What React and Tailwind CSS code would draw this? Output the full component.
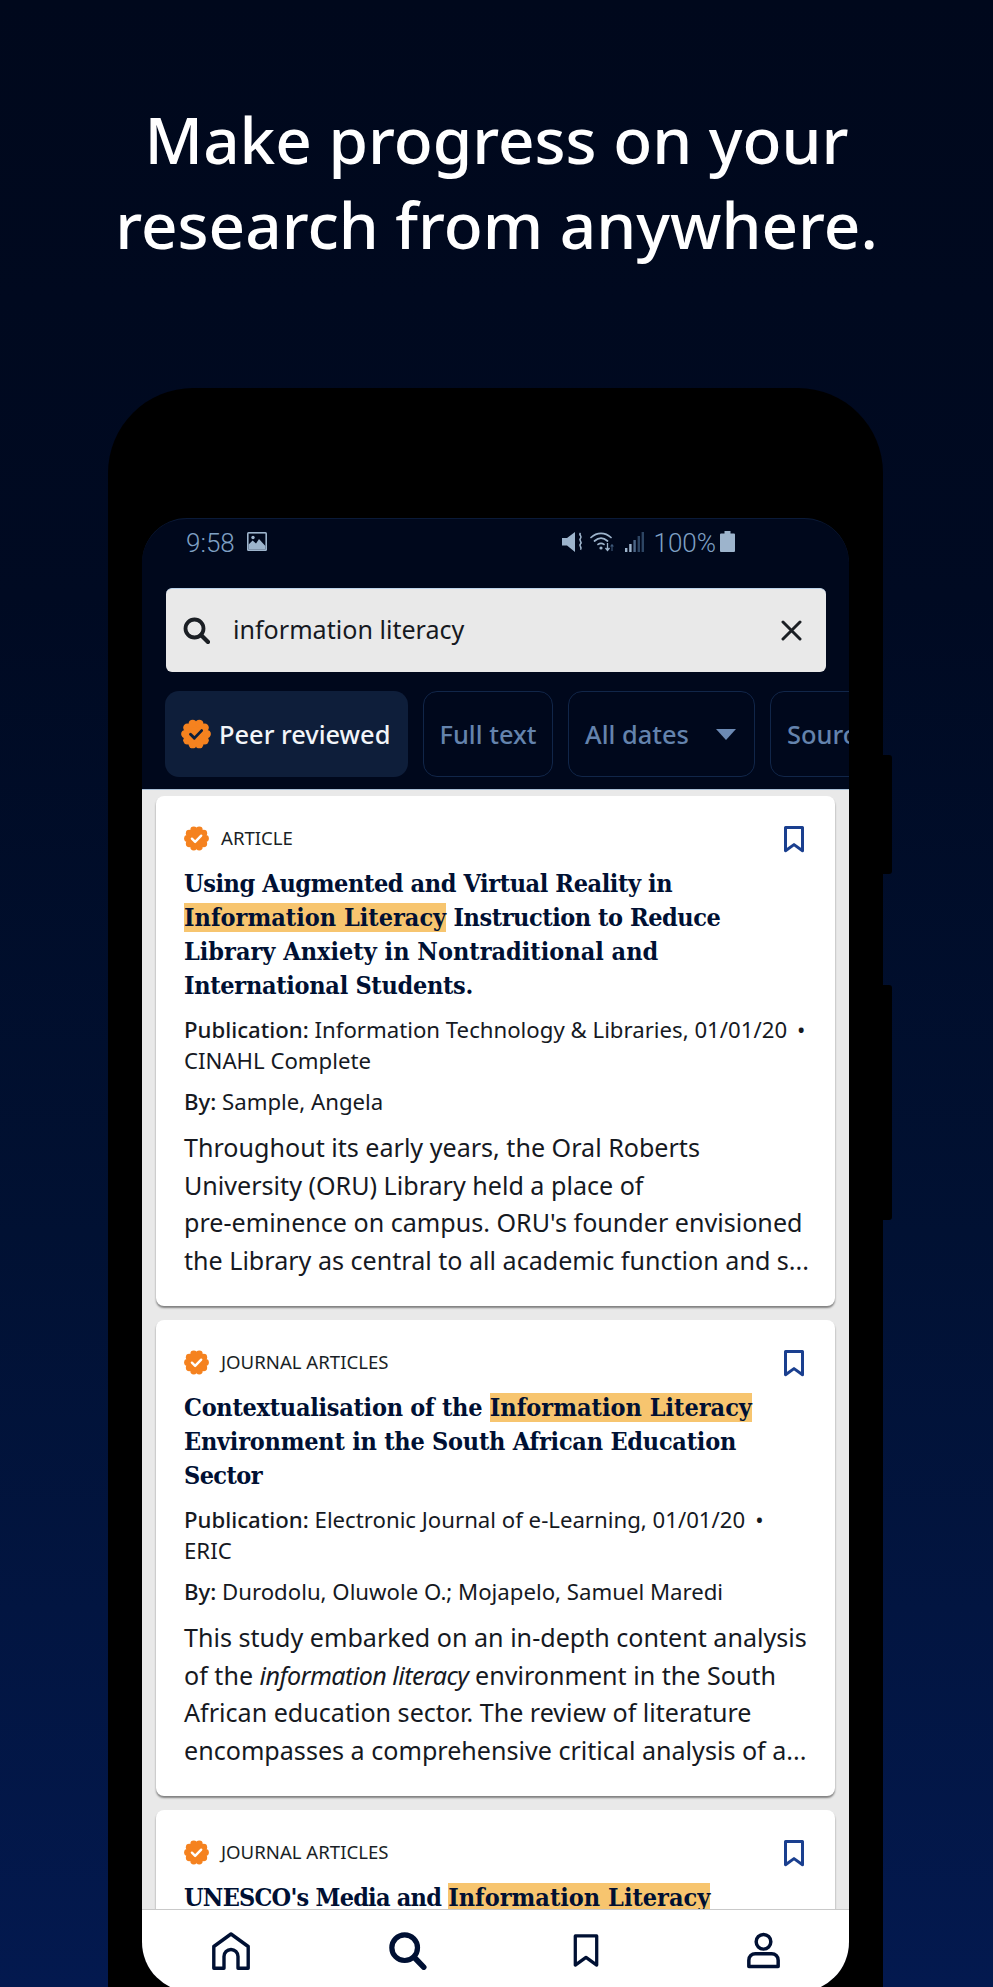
import React from "react";

function Badge({ size = 25, check = "#ffffff" }) {
  const bumps = Array.from({ length: 10 }, (_, i) => {
    const a = (i / 10) * Math.PI * 2;
    return [12 + Math.cos(a) * 8.6, 12 + Math.sin(a) * 8.6];
  });
  return (
    <svg width={size} height={size} viewBox="0 0 24 24" className="shrink-0">
      <circle cx="12" cy="12" r="9.4" fill="#f5821f" />
      {bumps.map(([x, y], i) => (
        <circle key={i} cx={x} cy={y} r="3.3" fill="#f5821f" />
      ))}
      <path d="M7.6 12.2l3.1 3.1 5.8-6" fill="none" stroke={check} strokeWidth="2.3" strokeLinecap="round" strokeLinejoin="round" />
    </svg>
  );
}

function Bookmark({ w = 20, h = 27, color = "#1a3f8f", sw = 3 }) {
  return (
    <svg width={w} height={h} viewBox="0 0 20 27" className="shrink-0">
      <path d="M1.5 1.5h17v23.2L10 18.6 1.5 24.7z" fill="none" stroke={color} strokeWidth={sw} strokeLinejoin="round" />
    </svg>
  );
}

function Mark({ children }) {
  return <span className="bg-[#f7c56f] tracking-normal">{children}</span>;
}

function Card({ label, title, pub, source, by, abstract }) {
  return (
    <div className="bg-white rounded-lg shadow-[0_2px_2px_rgba(0,0,0,0.45)] pt-[30px] pb-[27px] pl-[28px] pr-[28px]">
      <div className="flex items-start justify-between h-[41px]">
        <div className="flex items-center gap-[12px] h-[25px]">
          <Badge />
          <span className="pb-[2px] text-[18.6px] text-[#1a1f26] font-['Noto_Sans',sans-serif]">{label}</span>
        </div>
        <div className="mr-[3px]">
          <Bookmark />
        </div>
      </div>
      <h2 className="text-[25px] leading-[34px] font-bold text-[#001033] font-['DejaVu_Serif_Condensed','DejaVu_Serif',serif] whitespace-nowrap">{title}</h2>
      {pub && (
        <>
          <p className="mt-[12px] text-[22.2px] leading-[30.5px] text-[#16191f] font-['Noto_Sans',sans-serif] whitespace-nowrap">
            <span className="font-medium">Publication:</span> {pub}
            <span className="ml-[10px]">•</span>
            <br />
            {source}
          </p>
          <p className="mt-[11px] text-[22.2px] leading-[30px] text-[#16191f] font-['Noto_Sans',sans-serif] whitespace-nowrap">
            <span className="font-medium">By:</span> {by}
          </p>
          <div className="mt-[12px] text-[25.1px] leading-[37.5px] text-[#16191f] font-['Noto_Sans',sans-serif] whitespace-nowrap">
            {abstract.map((line, i) => (
              <div key={i}>{line}</div>
            ))}
          </div>
        </>
      )}
    </div>
  );
}

export default function App() {
  return (
    <div className="relative h-[1987px] w-[993px] overflow-hidden bg-[linear-gradient(180deg,#00081c_0%,#000a22_30%,#011133_62%,#03194f_100%)] font-['Noto_Sans',sans-serif]">
      <h1 className="pt-[97px] text-center text-[63.8px] leading-[85px] font-medium text-white h-[388px]">
        Make progress on your
        <br />
        research from anywhere.
      </h1>

      <div className="relative ml-[108px] w-[775px] h-[1640px] bg-black rounded-t-[85px] pt-[130px] pl-[34px]">
        <div className="absolute left-[775px] top-[367px] w-[9px] h-[119px] bg-black rounded-r-[3px]" />
        <div className="absolute left-[775px] top-[597px] w-[9px] h-[235px] bg-black rounded-r-[3px]" />

        <div className="w-[707px] h-[1474px] rounded-t-[45px] rounded-b-[50px] overflow-hidden bg-[#00081c] flex flex-col border-t border-[#0a1a38]">
          {/* status bar */}
          <div className="h-[69px] shrink-0 relative flex items-start pt-[7px] pl-[44px] text-[#7fa0c4] font-['Roboto',sans-serif] font-light">
            <span className="text-[26px] leading-[34px]">9:58</span>
            <svg width="20" height="19" viewBox="0 0 20 19" className="ml-[12px] mt-[6px]">
              <rect width="20" height="19" rx="1.5" fill="#9db4cc" />
              <rect x="1.6" y="1.6" width="16.8" height="15.8" fill="#00081c" />
              <path d="M1.6 17.4v-5l4-4 3.4 3 3-4.5 6.4 7v3.5z" fill="#9db4cc" />
              <circle cx="6" cy="5.5" r="1.7" fill="#9db4cc" />
            </svg>
            <div className="ml-auto mr-[114px] flex items-start">
              <svg width="21" height="20" viewBox="0 0 21 20" className="mt-[6px]">
                <path d="M0 6h5L13 0v20l-8-6.500H0z" fill="#9db4cc" />
                <path d="M18.500 1c-2.400 2 2.400 3.200 0 5.400s2.400 3.400 0 5.400 2.400 3.400 0 6" fill="none" stroke="#9db4cc" strokeWidth="1.600" />
              </svg>
              <svg width="24" height="22" viewBox="0 0 24 22" className="ml-[7px] mt-[5px]">
                <g fill="none" stroke="#9db4cc" strokeWidth="1.7" strokeLinecap="round">
                  <path d="M1 6.5c6-5.6 14-5.6 20 0" />
                  <path d="M4.5 10c4-3.4 9-3.4 13 0" />
                  <path d="M8 13.4c2-1.5 4-1.5 6 0" />
                </g>
                <circle cx="11" cy="17" r="1.6" fill="#9db4cc" />
                <path d="M17.5 12v7M15.5 17l2 2.5 2-2.5" fill="none" stroke="#9db4cc" strokeWidth="1.3" />
                <path d="M22 20v-6M20.6 15.5l1.4-1.8 1.4 1.8" fill="none" stroke="#3d5878" strokeWidth="1.1" />
              </svg>
              <svg width="19" height="20" viewBox="0 0 19 20" className="ml-[11px] mt-[6px]">
                <rect x="0" y="16" width="2.4" height="4" fill="#9db4cc" />
                <rect x="4.2" y="12" width="2.4" height="8" fill="#9db4cc" />
                <rect x="8.4" y="8" width="2.4" height="12" fill="#4c6788" />
                <rect x="12.6" y="4" width="2.4" height="16" fill="#2d4563" />
                <rect x="16.6" y="0" width="2.4" height="20" fill="#2d4563" />
              </svg>
              <span className="ml-[10px] text-[26px] leading-[34px]">100%</span>
              <svg width="15" height="21" viewBox="0 0 15 21" className="ml-[4px] mt-[5px]">
                <path d="M4.5 0h6v2.5H14a1 1 0 0 1 1 1V20a1 1 0 0 1-1 1H1a1 1 0 0 1-1-1V3.500a1 1 0 0 1 1-1h3.500z" fill="#9db4cc" />
              </svg>
            </div>
          </div>

          {/* search */}
          <div className="ml-[24px] mr-[23px] h-[84px] shrink-0 rounded-[6px] bg-[#e9e9e9] border-t border-[#bcd3ea] flex items-center pl-[17px] pr-[24px]">
            <svg width="27" height="27" viewBox="0 0 27 27" className="shrink-0">
              <circle cx="11.500" cy="11.500" r="9" fill="none" stroke="#1b1f24" strokeWidth="3.800" />
              <path d="M18 18l7 7" stroke="#1b1f24" strokeWidth="4.200" strokeLinecap="round" />
            </svg>
            <span className="ml-[23px] -mt-[2px] text-[25.100px] text-[#16191f]">information literacy</span>
            <svg width="21" height="21" viewBox="0 0 21 21" className="ml-auto shrink-0">
              <path d="M2 2l17 17M19 2L2 19" stroke="#1b1f24" strokeWidth="3" strokeLinecap="round" />
            </svg>
          </div>

          {/* filter chips */}
          <div className="mt-[19px] ml-[23px] h-[86px] shrink-0 flex gap-[15px] overflow-hidden text-[25.400px] font-medium text-[#6483ad] whitespace-nowrap">
            <div className="w-[243px] shrink-0 rounded-[14px] bg-[#0e1e3a] flex items-center pl-[16px] gap-[8px] text-[#f2f5f9]">
              <Badge size={30} check="#0e1e3a" />
              <span>Peer reviewed</span>
            </div>
            <div className="w-[130px] shrink-0 rounded-[14px] border border-[#112649] flex items-center justify-center">Full text</div>
            <div className="w-[187px] shrink-0 rounded-[14px] border border-[#112649] flex items-center pl-[16px]">
              <span>All dates</span>
              <svg width="20" height="11" viewBox="0 0 20 11" className="ml-[27px]">
                <path d="M0 0h20L10 11z" fill="#6c8ab4" />
              </svg>
            </div>
            <div className="w-[120px] shrink-0 rounded-[14px] border border-[#112649] flex items-center pl-[16px]">Sources</div>
          </div>

          {/* results */}
          <div className="mt-[12px] flex-1 min-h-0 overflow-hidden bg-[#e9e9e9] border-t border-[#a9bfd6] px-[14px] pt-[6px] flex flex-col gap-[14px]">
            <Card
              label="ARTICLE"
              title={
                <>
                  <div className="tracking-[-0.4px]">Using Augmented and Virtual Reality in</div>
                  <div className="tracking-[-0.45px]"><Mark>Information Literacy</Mark> Instruction to Reduce</div>
                  <div>Library Anxiety in Nontraditional and</div>
                  <div className="tracking-[-0.3px]">International Students.</div>
                </>
              }
              pub="Information Technology & Libraries, 01/01/20"
              source="CINAHL Complete"
              by="Sample, Angela"
              abstract={[
                "Throughout its early years, the Oral Roberts",
                "University (ORU) Library held a place of",
                "pre-eminence on campus. ORU's founder envisioned",
                "the Library as central to all academic function and s...",
              ]}
            />
            <Card
              label="JOURNAL ARTICLES"
              title={
                <>
                  <div className="tracking-[-0.27px]">Contextualisation of the <Mark>Information Literacy</Mark></div>
                  <div className="tracking-[-0.24px]">Environment in the South African Education</div>
                  <div className="tracking-[-0.6px]">Sector</div>
                </>
              }
              pub="Electronic Journal of e-Learning, 01/01/20"
              source="ERIC"
              by="Durodolu, Oluwole O.; Mojapelo, Samuel Maredi"
              abstract={[
                "This study embarked on an in-depth content analysis",
                <>of the <em className="tracking-[-0.55px]">information literacy</em> environment in the South</>,
                "African education sector. The review of literature",
                "encompasses a comprehensive critical analysis of a...",
              ]}
            />
            <Card
              label="JOURNAL ARTICLES"
              title={<div className="tracking-[-0.77px]">UNESCO's Media and <Mark>Information Literacy</Mark></div>}
            />
          </div>

          {/* bottom nav */}
          <div className="relative h-[83px] shrink-0 bg-white border-t border-[#c9c9c9] text-[#001033]">
            <div className="flex items-start pt-[22px] pl-[70px]">
              <svg width="38" height="38" viewBox="0 0 38 38" className="shrink-0">
                <path d="M1.800 36.200V14.500L19 2l17.200 12.500v21.700H26V24.500a7 7 0 0 0-14 0v11.700z" fill="none" stroke="#001033" strokeWidth="3.400" strokeLinejoin="round" />
              </svg>
              <svg width="38" height="38" viewBox="0 0 40 40" className="ml-[139px] shrink-0">
                <circle cx="16.500" cy="16.500" r="13.500" fill="none" stroke="#001033" strokeWidth="5.500" />
                <path d="M26.500 26.500L36.500 37" stroke="#001033" strokeWidth="6" strokeLinecap="round" />
              </svg>
              <div className="ml-[146px] mt-[2px]">
                <Bookmark w={26} h={34} color="#001033" sw={2.600} />
              </div>
              <svg width="33" height="39" viewBox="0 0 36 40" className="ml-[148px] -mt-[1px] shrink-0">
                <circle cx="18" cy="10.500" r="8" fill="none" stroke="#001033" strokeWidth="3.800" />
                <path d="M9 23.500h18a7 7 0 0 1 7 7v7H2v-7a7 7 0 0 1 7-7z" fill="none" stroke="#001033" strokeWidth="3.800" strokeLinejoin="round" />
              </svg>
            </div>
          </div>
        </div>
      </div>
    </div>
  );
}
